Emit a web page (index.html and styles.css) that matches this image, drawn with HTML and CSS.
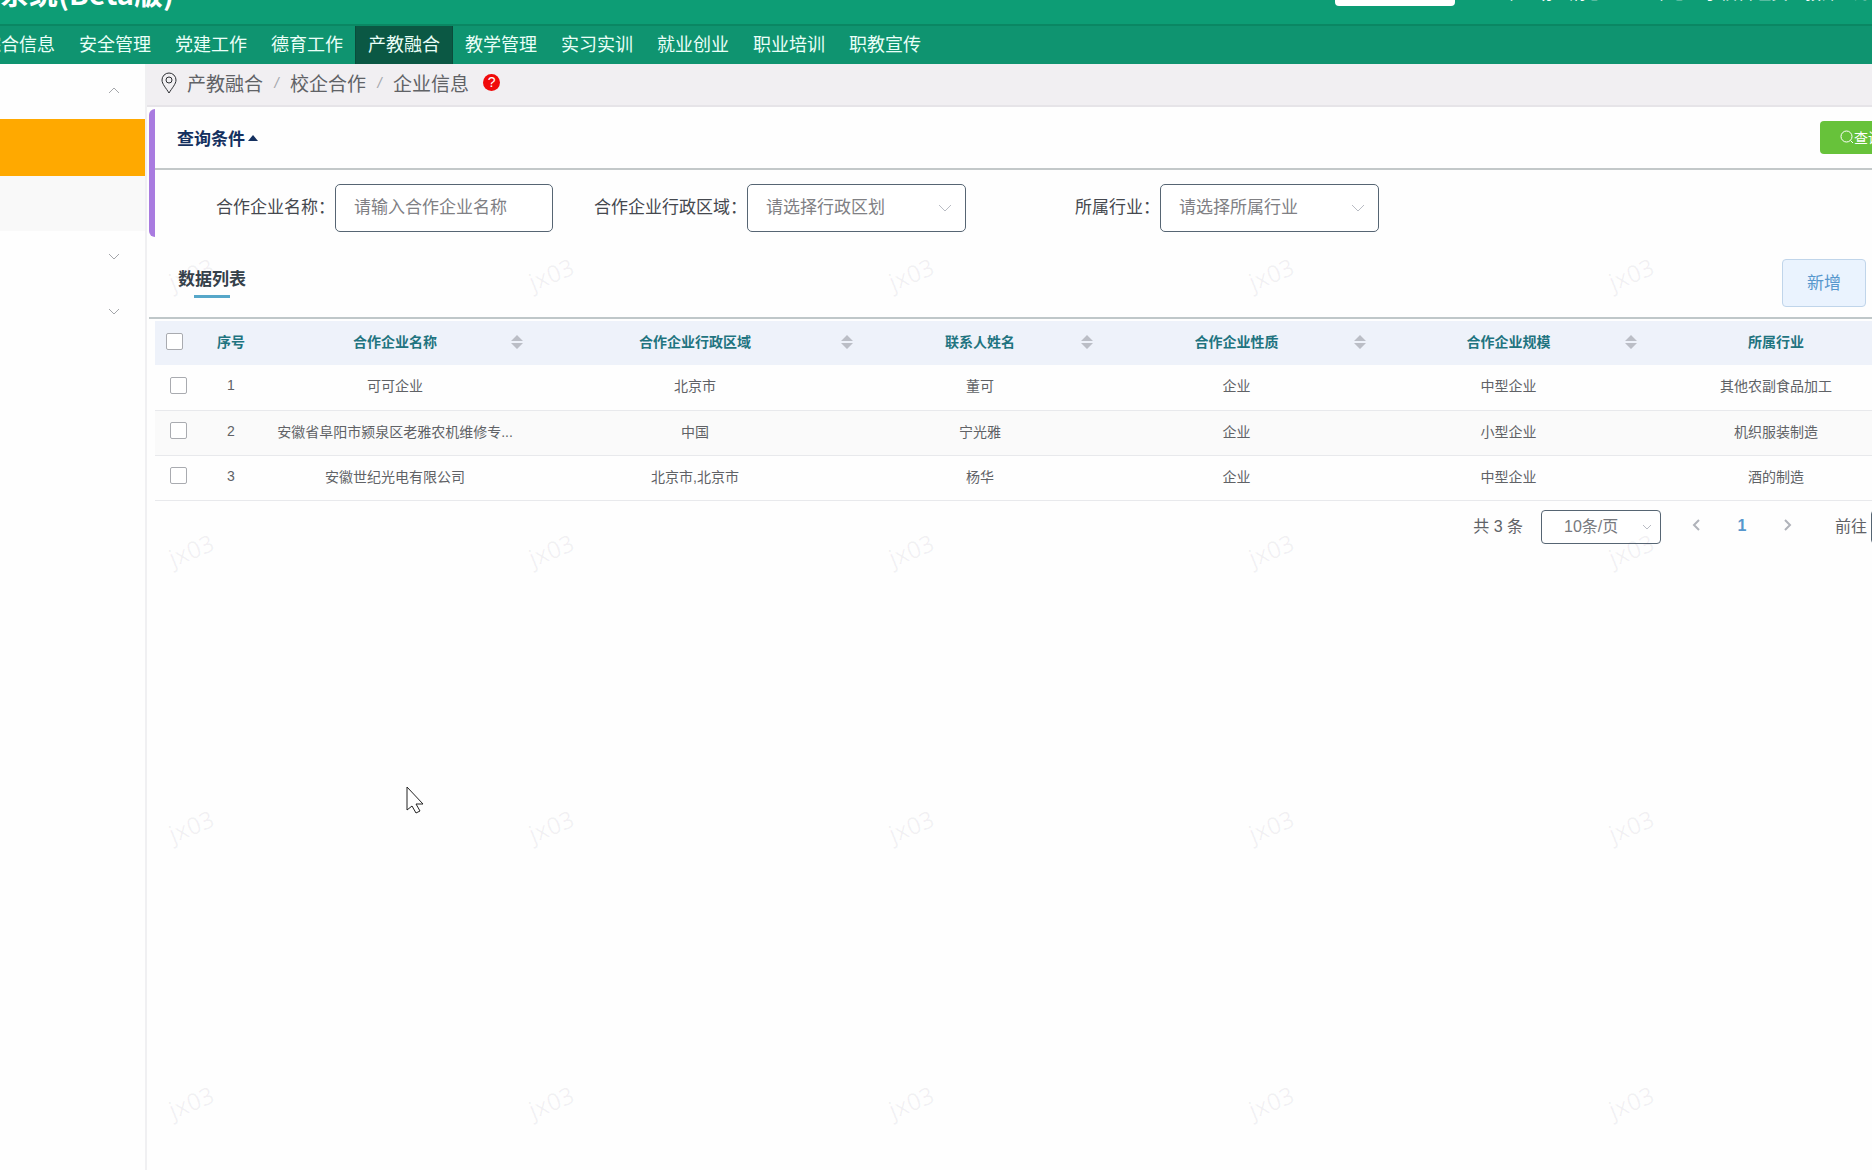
FILE: index.html
```html
<!DOCTYPE html>
<html lang="zh-CN">
<head>
<meta charset="utf-8">
<title>企业信息</title>
<link rel="stylesheet" href="styles.css">
</head>
<body>
<div class="app">
  <header class="topbar">
    <h1 class="brand">系统(Beta版)</h1>
    <div class="top-tools">
      <input class="top-search" type="text" aria-label="搜索">
      <span>帮</span><span>助</span><span>消息</span><span>个人中心</span><span>学校管理员</span><span>教师</span><span>退出</span>
    </div>
  </header>
  <nav class="mainnav">
    <a href="#">综合信息</a>
    <a href="#">安全管理</a>
    <a href="#">党建工作</a>
    <a href="#">德育工作</a>
    <a href="#" class="active">产教融合</a>
    <a href="#">教学管理</a>
    <a href="#">实习实训</a>
    <a href="#">就业创业</a>
    <a href="#">职业培训</a>
    <a href="#">职教宣传</a>
  </nav>

  <div class="body">
    <aside class="sidebar">
      <button class="side-item" aria-label="收起"><svg width="12" height="8" viewBox="0 0 12 8"><path d="M1 7 6 2l5 5"/></svg></button>
      <div class="side-item current"></div>
      <div class="side-item sub"></div>
      <button class="side-item" aria-label="展开"><svg width="12" height="8" viewBox="0 0 12 8"><path d="M1 1l5 5 5-5"/></svg></button>
      <button class="side-item" aria-label="展开"><svg width="12" height="8" viewBox="0 0 12 8"><path d="M1 1l5 5 5-5"/></svg></button>
    </aside>

    <main class="main">
      <div class="crumbs">
        <svg class="pin" width="16" height="22" viewBox="0 0 16 22"><path d="M8 21C5 16 1 12 1 8a7 7 0 0 1 14 0c0 4-4 8-7 13z"/><circle cx="8" cy="8" r="3"/></svg>
        <a href="#">产教融合</a><i>/</i><a href="#">校企合作</a><i>/</i><a href="#">企业信息</a>
        <span class="help">?</span>
      </div>

      <section class="query">
        <div class="query-head">
          <h2>查询条件<svg width="10" height="6" viewBox="0 0 10 6"><path d="M0 6 5 0l5 6z"/></svg></h2>
          <button class="btn-search"><svg width="14" height="14" viewBox="0 0 14 14"><circle cx="6.500" cy="6.500" r="5.500"/><path d="M10.500 10.500 13 13"/></svg>查询</button>
        </div>
        <form class="fields">
          <label for="f-name">合作企业名称：</label>
          <input id="f-name" class="control" type="text" placeholder="请输入合作企业名称">
          <label for="f-area">合作企业行政区域：</label>
          <div class="select-wrap">
            <select id="f-area" class="control"><option>请选择行政区划</option></select>
            <svg width="14" height="8" viewBox="0 0 14 8"><path d="M1 1l6 6 6-6"/></svg>
          </div>
          <label for="f-trade">所属行业：</label>
          <div class="select-wrap">
            <select id="f-trade" class="control"><option>请选择所属行业</option></select>
            <svg width="14" height="8" viewBox="0 0 14 8"><path d="M1 1l6 6 6-6"/></svg>
          </div>
        </form>
      </section>

      <div class="list-head">
        <h2>数据列表</h2>
        <button class="btn-add">新增</button>
      </div>

      <div class="table-wrap">
        <table>
          <colgroup><col class="c-check"><col class="c-no"><col class="c-name"><col class="c-area"><col class="c-contact"><col class="c-nature"><col class="c-scale"><col class="c-trade"></colgroup>
          <thead>
            <tr>
              <th><input type="checkbox" aria-label="全选"></th>
              <th>序号</th>
              <th class="sortable">合作企业名称<svg width="12" height="14" viewBox="0 0 12 14"><path d="M0 6 6 0l6 6zM0 8h12l-6 6z"/></svg></th>
              <th class="sortable">合作企业行政区域<svg width="12" height="14" viewBox="0 0 12 14"><path d="M0 6 6 0l6 6zM0 8h12l-6 6z"/></svg></th>
              <th class="sortable">联系人姓名<svg width="12" height="14" viewBox="0 0 12 14"><path d="M0 6 6 0l6 6zM0 8h12l-6 6z"/></svg></th>
              <th class="sortable">合作企业性质<svg width="12" height="14" viewBox="0 0 12 14"><path d="M0 6 6 0l6 6zM0 8h12l-6 6z"/></svg></th>
              <th class="sortable">合作企业规模<svg width="12" height="14" viewBox="0 0 12 14"><path d="M0 6 6 0l6 6zM0 8h12l-6 6z"/></svg></th>
              <th>所属行业</th>
            </tr>
          </thead>
          <tbody>
            <tr><td><input type="checkbox" aria-label="选择第1行"></td><td>1</td><td>可可企业</td><td>北京市</td><td>董可</td><td>企业</td><td>中型企业</td><td>其他农副食品加工</td></tr>
            <tr><td><input type="checkbox" aria-label="选择第2行"></td><td>2</td><td>安徽省阜阳市颍泉区老雅农机维修专...</td><td>中国</td><td>宁光雅</td><td>企业</td><td>小型企业</td><td>机织服装制造</td></tr>
            <tr><td><input type="checkbox" aria-label="选择第3行"></td><td>3</td><td>安徽世纪光电有限公司</td><td>北京市,北京市</td><td>杨华</td><td>企业</td><td>中型企业</td><td>酒的制造</td></tr>
          </tbody>
        </table>
      </div>

      <div class="pager">
        <span class="total">共 3 条</span>
        <div class="select-wrap size">
          <select aria-label="每页条数"><option>10条/页</option></select>
          <svg width="10" height="6" viewBox="0 0 10 6"><path d="M1 1l4 4 4-4"/></svg>
        </div>
        <button class="page" aria-label="上一页"><svg width="8" height="12" viewBox="0 0 8 12"><path d="M7 1 2 6l5 5"/></svg></button>
        <button class="page on">1</button>
        <button class="page" aria-label="下一页"><svg width="8" height="12" viewBox="0 0 8 12"><path d="M1 1l5 5-5 5"/></svg></button>
        <label class="goto" for="goto">前往</label>
        <input id="goto" class="goto-input" type="text">
      </div>
    </main>
  </div>

  <div class="watermark" aria-hidden="true">
    <span>jx03</span><span>jx03</span><span>jx03</span><span>jx03</span><span>jx03</span>
    <span>jx03</span><span>jx03</span><span>jx03</span><span>jx03</span><span>jx03</span>
    <span>jx03</span><span>jx03</span><span>jx03</span><span>jx03</span><span>jx03</span>
    <span>jx03</span><span>jx03</span><span>jx03</span><span>jx03</span><span>jx03</span>
  </div>
  <svg class="cursor" width="18" height="28" viewBox="0 0 18 28"><path d="M1 1v23l5-4 4 7 4-2-4-7h7z"/></svg>
</div>
</body>
</html>
```
FILE: styles.css
```css
* { box-sizing: border-box; }
body {
  margin: 0;
  overflow: hidden;
  background: #fefefe;
  color: #606266;
  font-family: "Liberation Sans", "Noto Sans CJK SC", sans-serif;
  font-size: 14px;
}
h1, h2 { margin: 0; }
a { color: inherit; text-decoration: none; }
button, input, select { font: inherit; }
button { padding: 0; border: 0; background: none; color: inherit; }
svg { fill: none; }

/* The workspace is wider than the window; its right edge runs out of view. */
.app {
  position: relative;
  display: flex;
  flex-direction: column;
  min-height: 100vh;
  margin-right: -36px;
}

.topbar {
  display: flex;
  justify-content: space-between;
  align-items: flex-end;
  height: 26px;
  overflow: hidden;
  background: #0d9d75;
  border-bottom: 2px solid #0a8763;
  color: #fff;
}
.brand {
  padding-bottom: 16px;
  font-family: "Noto Sans CJK SC", sans-serif;
  font-size: 29px;
  line-height: 32px;
  white-space: nowrap;
}
.top-tools {
  display: flex;
  align-items: flex-end;
  gap: 16px;
  padding: 0 20px 18px 0;
  font-size: 17px;
  line-height: 24px;
  white-space: nowrap;
}
.top-search {
  width: 120px;
  height: 32px;
  margin-right: 32px;
  border: 0;
  border-radius: 4px;
  background: #fff;
}

.mainnav {
  display: flex;
  height: 38px;
  margin-left: -29px;
  background: #0f9470;
  color: #eafff8;
  font-size: 18px;
  line-height: 38px;
}
.mainnav a { padding: 0 12px; white-space: nowrap; }
.mainnav .active {
  border: solid #0a4c3b;
  border-width: 0 1px;
  background: #0b5844;
}

.body { display: flex; flex: 1; }
.sidebar {
  flex: none;
  width: 147px;
  border-right: 2px solid #f0f0f2;
}
.side-item {
  display: flex;
  align-items: center;
  justify-content: flex-end;
  width: 100%;
  height: 55px;
  padding: 0 25px 4px 0;
}
.side-item svg { stroke: #a4a6aa; }
.side-item.current { height: 57px; background: #ffa900; }
.side-item.sub { background: #f9f9f9; }

.main { flex: 1; min-width: 0; }
.crumbs {
  display: flex;
  align-items: center;
  height: 43px;
  padding: 0 0 4px 14px;
  background: #f1eff2;
  border-bottom: 2px solid #e6e4e8;
  font-size: 19px;
}
.crumbs i { width: 27px; color: #a4a6ac; font-size: 15px; text-align: center; }
.pin { margin-right: 10px; stroke: #2c2e32; }
.help {
  width: 17px;
  height: 17px;
  margin-left: 14px;
  border-radius: 50%;
  background: #f00a0a;
  color: #fff;
  font-size: 14px;
  line-height: 17px;
  text-align: center;
}

.query {
  margin: 2px 0 0 2px;
  border-left: 6px solid #a97be0;
  border-radius: 6px 0 0 6px;
}
.query-head {
  display: flex;
  justify-content: space-between;
  align-items: center;
  height: 61px;
  padding: 0 0 2px 22px;
  border-bottom: 2px solid #c3c8c9;
}
.query-head h2 {
  display: flex;
  align-items: center;
  gap: 3px;
  color: #14305f;
  font-size: 17px;
}
.query-head h2 path { fill: #14305f; }
.btn-search {
  display: flex;
  align-items: center;
  height: 33px;
  width: 88px;
  padding: 0 0 2px 20px;
  border-radius: 4px;
  background: #67c23a;
  color: #fff;
  font-size: 14px;
  white-space: nowrap;
}
.btn-search svg { stroke: #fff; }
.fields {
  display: grid;
  grid-template-columns: 180px 218px 194px 219px 194px 219px;
  align-items: center;
  height: 67px;
  padding-top: 8px;
  color: #45484e;
  font-size: 17px;
}
.fields label { padding-bottom: 4px; text-align: right; white-space: nowrap; }
.control {
  width: 100%;
  height: 48px;
  padding: 0 18px;
  border: 1px solid #566573;
  border-radius: 5px;
  background: #fff;
  color: #808084;
}
.control::placeholder { color: #808084; }
select { appearance: none; }
.select-wrap { position: relative; }
.select-wrap svg {
  position: absolute;
  top: 50%;
  right: 14px;
  margin-top: -4px;
  stroke: #b9bcc4;
  pointer-events: none;
}

.list-head {
  display: flex;
  justify-content: space-between;
  align-items: center;
  height: 82px;
  margin-left: 2px;
  padding-right: 42px;
  padding-left: 29px;
  border-bottom: 2px solid #bfc7c9;
}
.list-head h2 {
  display: grid;
  justify-items: center;
  align-self: flex-end;
  gap: 5px;
  padding-bottom: 19px;
  color: #35414a;
  font-size: 17px;
}
.list-head h2::after {
  content: "";
  width: 36px;
  height: 3px;
  background: #56a7c9;
}
.btn-add {
  width: 84px;
  height: 48px;
  margin-top: 12px;
  padding-bottom: 4px;
  border: 1px solid #c0d5ea;
  border-radius: 4px;
  background: #eaf3fe;
  color: #5797cd;
  font-size: 17px;
}

.table-wrap { margin: 2px 0 0 8px; }
table { width: 100%; border-collapse: collapse; table-layout: fixed; }
.c-check { width: 47px; }
.c-no { width: 58px; }
.c-name { width: 270px; }
.c-area { width: 330px; }
.c-contact { width: 240px; }
.c-nature { width: 273px; }
.c-scale { width: 271px; }
.c-trade { width: 264px; }
th, td { padding: 0; text-align: center; white-space: nowrap; }
th { position: relative; height: 44px; padding-bottom: 4px; background: #eef2fa; color: #1f7480; }
th:first-child { padding-right: 8px; }
th svg { position: absolute; top: 14px; right: 7px; }
th path { fill: #bbbec6; }
td { height: 45px; padding-bottom: 4px; border-bottom: 1px solid #e8e9ec; }
tbody tr:nth-child(even) { background: #fafafa; }
input[type="checkbox"] {
  appearance: none;
  display: block;
  width: 17px;
  height: 17px;
  margin: 0 auto;
  border: 1px solid #a9abb0;
  border-radius: 2px;
  background: #fff;
}

.pager {
  display: flex;
  justify-content: flex-end;
  align-items: center;
  height: 52px;
  font-size: 16px;
}
.total, .goto { padding-bottom: 4px; white-space: nowrap; }
.total { margin-right: 18px; }
.size { width: 120px; margin-right: 12px; }
.size select {
  width: 100%;
  height: 34px;
  padding: 0 22px;
  border: 1px solid #566573;
  border-radius: 4px;
  background: #fff;
  color: #77797e;
}
.size svg { right: 9px; margin-top: -3px; }
.page { width: 46px; height: 34px; padding-bottom: 2px; }
.page svg { stroke: #b0b3ba; stroke-width: 2; }
.page.on { color: #5797cd; font-weight: bold; }
.goto { margin: 0 4px 0 24px; }
.goto-input { width: 37px; height: 34px; border: 1px solid #566573; border-radius: 4px; }

/* Repeated account mark that lies over the work area. */
.watermark {
  position: absolute;
  top: 260px;
  left: 168px;
  display: grid;
  grid-template-columns: repeat(5, 360px);
  row-gap: 248px;
  color: rgba(60, 40, 90, .06);
  font-family: "Noto Sans", sans-serif;
  font-size: 24px;
  line-height: 28px;
  pointer-events: none;
}
.watermark span { width: 48px; height: 28px; transform: rotate(-22deg); }

.cursor {
  position: absolute;
  top: 786px;
  left: 406px;
  pointer-events: none;
}
.cursor path { fill: #fff; stroke: #222; }
```
